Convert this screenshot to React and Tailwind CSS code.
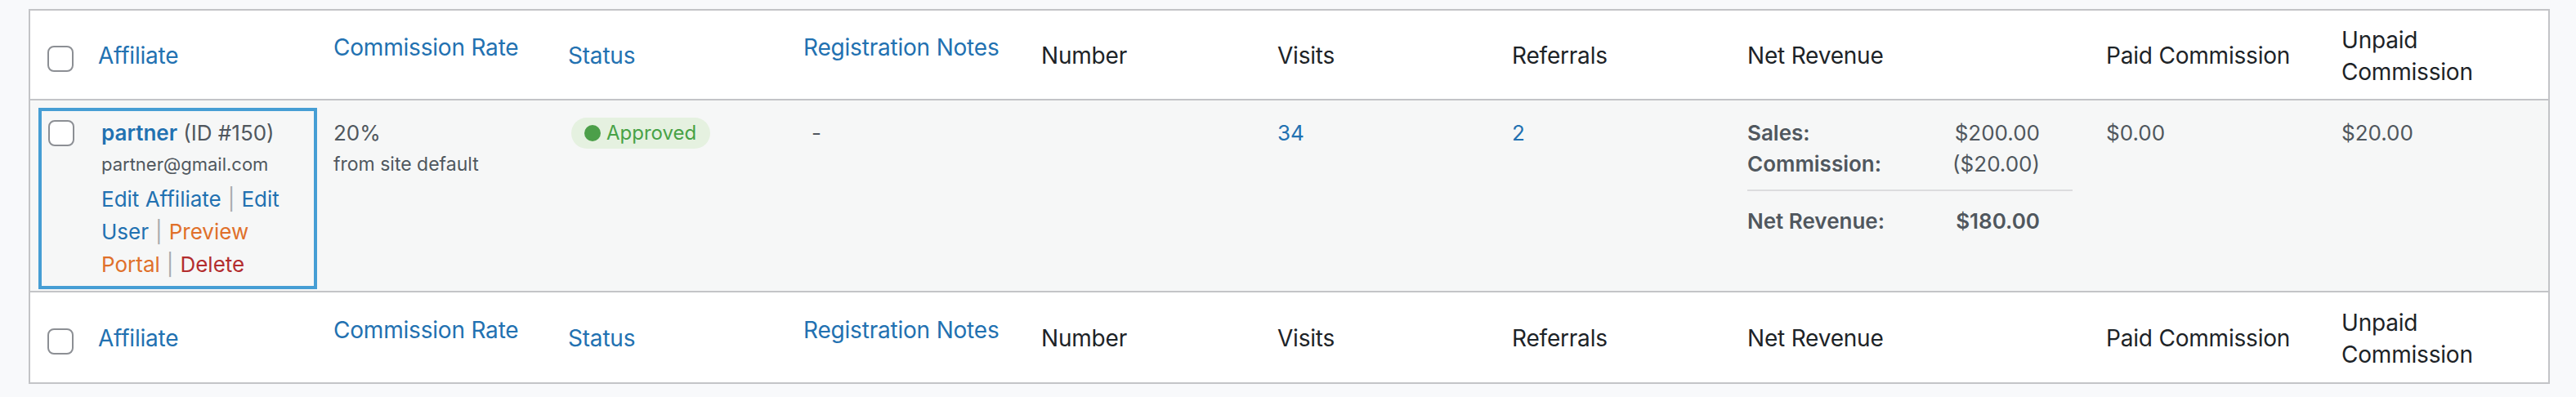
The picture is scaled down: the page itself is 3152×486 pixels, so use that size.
import React from "react";

const cols =
  "grid grid-cols-[351px_287px_288px_291px_289px_287px_288px_439px_288px_1fr]";

const Checkbox = ({ className = "" }) => (
  <span
    className={`inline-block w-[32px] h-[32px] shrink-0 rounded-[8px] border-2 border-[#8c8f94] bg-white ${className}`}
  />
);

const HeadRow = ({ last }) => {
  const link = "text-[#2271b1]";
  const dark = "text-[#1d2327]";
  const cell = "flex items-center pl-5 pt-[3px] whitespace-nowrap";
  return (
    <div
      className={`${cols} ${last ? "h-[110px]" : "h-[110px] border-b-2 border-[#c3c4c7]"} bg-white text-[28px] leading-[39px] tracking-[-0.2px]`}
    >
      <div className="flex items-center pl-[21px] pt-[3px]">
        <Checkbox className="mt-[6px]" />
        <span className={`ml-[30px] ${link}`}>Affiliate</span>
      </div>
      <div className={`${cell} pb-[20px] ${link}`}>Commission Rate</div>
      <div className={`${cell} ${link}`}>Status</div>
      <div className={`${cell} pb-[20px] ${link}`}>Registration Notes</div>
      <div className={`${cell} ${dark}`}>Number</div>
      <div className={`${cell} ${dark}`}>Visits</div>
      <div className={`${cell} ${dark}`}>Referrals</div>
      <div className={`${cell} ${dark}`}>Net Revenue</div>
      <div className={`${cell} ${dark}`}>Paid Commission</div>
      <div className={`${cell} ${dark}`}>
        Unpaid
        <br />
        Commission
      </div>
    </div>
  );
};

const Sep = () => <span className="text-[#a7aaad] mx-[8px]">|</span>;

const BodyRow = () => {
  const cell = "pl-5 pt-[21px] whitespace-nowrap";
  return (
    <div
      className={`${cols} h-[235px] bg-[#f6f7f7] border-b-2 border-[#c3c4c7] text-[26px] leading-[38px] text-[#50575e]`}
    >
      {/* affiliate */}
      <div className="pl-[10px] pt-[9px] pb-[2px]">
        <div className="h-full border-4 border-[#469ed4] flex pl-[8px]">
          <Checkbox className="mt-[11px]" />
          <div className="ml-[33px] pt-[8px] whitespace-nowrap">
            <div>
              <span className="font-semibold text-[#2271b1]">partner</span> (ID #150)
            </div>
            <div className="text-[22px]">partner@gmail.com</div>
            <div className="mt-[4px] leading-[40px]">
              <div>
                <span className="text-[#2271b1]">Edit Affiliate</span>
                <Sep />
                <span className="text-[#2271b1]">Edit</span>
              </div>
              <div>
                <span className="text-[#2271b1]">User</span>
                <Sep />
                <span className="text-[#e0702a]">Preview</span>
              </div>
              <div>
                <span className="text-[#e0702a]">Portal</span>
                <Sep />
                <span className="text-[#b32d2e]">Delete</span>
              </div>
            </div>
          </div>
        </div>
      </div>
      {/* commission rate */}
      <div className={cell}>
        <div>20%</div>
        <div className="text-[23px]">from site default</div>
      </div>
      {/* status */}
      <div className={`${cell} pl-[24px]`}>
        <span className="inline-flex items-center h-[38px] rounded-full bg-[#e5f1e0] pl-[16px] pr-[17px] text-[24px] text-[#48a246]">
          <span className="w-[20px] h-[20px] rounded-full bg-[#4c9f49] mr-[7px]" />
          Approved
        </span>
      </div>
      <div className={`${cell} pl-[30px]`}>-</div>
      <div className={cell}></div>
      <div className={`${cell} text-[#2271b1]`}>34</div>
      <div className={`${cell} text-[#2271b1]`}>2</div>
      {/* net revenue */}
      <div className={cell}>
        <div className="w-[398px]">
          <div className="grid grid-cols-[1fr_auto] font-semibold">
            <span>Sales:</span>
            <span className="text-right pr-[40px] font-normal">$200.00</span>
            <span>Commission:</span>
            <span className="text-right pr-[40px] font-normal">($20.00)</span>
          </div>
          <div className="mt-[12px] border-t-2 border-[#dcdcde]" />
          <div className="mt-[18px] grid grid-cols-[1fr_auto] font-semibold">
            <span>Net Revenue:</span>
            <span className="text-right pr-[40px]">$180.00</span>
          </div>
        </div>
      </div>
      <div className={cell}>$0.00</div>
      <div className={cell}>$20.00</div>
    </div>
  );
};

export default function App() {
  return (
    <div className="h-[486px] bg-[#f8f9fb] pt-[11px] pl-[35px] font-['Inter',sans-serif]">
      <div className="w-[3085px] border-2 border-[#c3c4c7] bg-white">
        <HeadRow />
        <BodyRow />
        <HeadRow last />
      </div>
    </div>
  );
}
